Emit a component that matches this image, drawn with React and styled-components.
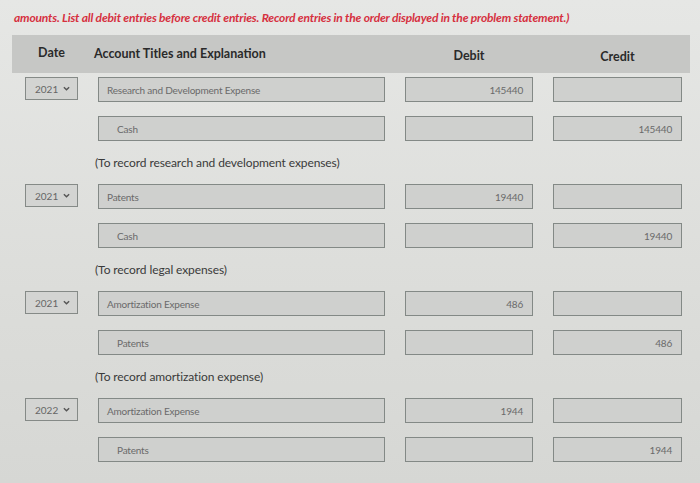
import styled, { createGlobalStyle } from "styled-components"

const GlobalStyle = createGlobalStyle`
  html, body {
    margin: 0;
    padding: 0;
    background: #dedfdc;
    font-family: Lato, "Liberation Sans", sans-serif;
  }
`

const Page = styled.div`
  width: 700px;
  height: 483px;
  overflow: hidden;
  background: linear-gradient(180deg, #e6e7e5 0%, #dcddda 60%, #d6d7d4 100%);
`

const Instructions = styled.div`
  padding: 10px 0 0 14px;
  height: 24px;
  box-sizing: border-box;
  color: #d6303f;
  font-size: 12px;
  font-weight: 700;
  font-style: italic;
  letter-spacing: -0.18px;
  white-space: nowrap;
`

const HeaderBar = styled.div`
  margin: 11px 10px 0 12px;
  height: 38px;
  background: #c6c7c5;
  display: grid;
  grid-template-columns: 53px 287px 128px 129px;
  column-gap: 20px;
  padding-left: 13px;
  align-items: center;
`

const HeadCell = styled.div`
  font-size: 12.5px;
  font-weight: 700;
  color: #2a2a2a;
  text-align: ${(p) => p.$align || "center"};
  margin-left: ${(p) => p.$shift || 0}px;
  margin-top: ${(p) => p.$down || 0}px;
`

const Body = styled.div`
  padding: 4px 0 0 25px;
`

const Group = styled.div`
  margin-bottom: 13px;
`

const Row = styled.div`
  display: grid;
  grid-template-columns: 53px 287px 128px 129px;
  column-gap: 20px;
  align-items: start;
  margin-bottom: ${(p) => p.$gap || 0}px;
`

const DateSelect = styled.div`
  height: 23px;
  box-sizing: border-box;
  border: 1px solid #858a87;
  background: #d3d4d2;
  display: flex;
  align-items: center;
  justify-content: space-between;
  padding: 0 7px 0 9px;
  font-size: 10px;
  color: #666;
`

const Chevron = styled.svg`
  width: 7px;
  height: 5px;
`

const Field = styled.div`
  height: 25px;
  box-sizing: border-box;
  border: 1.5px solid #838986;
  background: #cfd0ce;
  display: flex;
  align-items: center;
  justify-content: ${(p) => (p.$num ? "flex-end" : "flex-start")};
  padding: ${(p) => (p.$num ? "0 9px 0 0" : `0 0 0 ${p.$indent ? 18 : 8}px`)};
  font-size: 10px;
  color: #6a6a6a;
  letter-spacing: -0.2px;
  white-space: nowrap;
`

const Note = styled.div`
  margin: 14px 0 0 70px;
  height: 16px;
  line-height: 16px;
  font-size: 12px;
  color: #3a3a3a;
  letter-spacing: -0.1px;
`

const entries = [
  {
    year: "2021",
    debitAcct: "Research and Development Expense",
    creditAcct: "Cash",
    amount: "145440",
    note: "(To record research and development expenses)",
  },
  {
    year: "2021",
    debitAcct: "Patents",
    creditAcct: "Cash",
    amount: "19440",
    note: "(To record legal expenses)",
  },
  {
    year: "2021",
    debitAcct: "Amortization Expense",
    creditAcct: "Patents",
    amount: "486",
    note: "(To record amortization expense)",
  },
  {
    year: "2022",
    debitAcct: "Amortization Expense",
    creditAcct: "Patents",
    amount: "1944",
  },
]

const Entry = ({ e }) => (
  <Group>
    <Row $gap={14}>
      <DateSelect>
        {e.year}
        <Chevron viewBox="0 0 8 5">
          <path d="M1 1l3 3 3-3" fill="none" stroke="#555" strokeWidth="1.6" />
        </Chevron>
      </DateSelect>
      <Field>{e.debitAcct}</Field>
      <Field $num>{e.amount}</Field>
      <Field></Field>
    </Row>
    <Row>
      <div />
      <Field $indent>{e.creditAcct}</Field>
      <Field></Field>
      <Field $num>{e.amount}</Field>
    </Row>
    {e.note && <Note>{e.note}</Note>}
  </Group>
)

export default function App() {
  return (
    <Page>
      <GlobalStyle />
      <Instructions>
        amounts. List all debit entries before credit entries. Record entries in the order displayed in the problem statement.)
      </Instructions>
      <HeaderBar>
        <HeadCell $down={-4}>Date</HeadCell>
        <HeadCell $align="left" $shift={-4} $down={-2}>Account Titles and Explanation</HeadCell>
        <HeadCell $down={2}>Debit</HeadCell>
        <HeadCell $down={4}>Credit</HeadCell>
      </HeaderBar>
      <Body>
        {entries.map((e, i) => (
          <Entry key={i} e={e} />
        ))}
      </Body>
    </Page>
  )
}
